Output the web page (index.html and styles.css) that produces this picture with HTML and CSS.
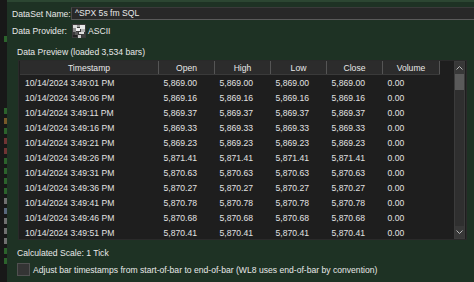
FILE: index.html
```html
<!DOCTYPE html>
<html lang="en">
<head>
    <meta charset="UTF-8">
    <title>DataSet</title>
    <link rel="stylesheet" href="styles.css">
</head>
<body>
    <div class="desktop">
        <div class="behind">
            <i class="mark c-green" style="margin-top: 36px"></i>
            <i class="mark c-green" style="margin-top: 62px"></i>
            <i class="mark c-orange"></i>
            <i class="mark c-green"></i>
            <i class="mark c-red"></i>
            <i class="mark c-red"></i>
            <i class="mark c-green"></i>
            <i class="mark c-green"></i>
            <i class="mark c-green"></i>
            <i class="mark c-green"></i>
            <i class="mark c-white"></i>
            <i class="mark c-blue"></i>
            <i class="mark c-white"></i>
            <i class="mark c-white"></i>
            <i class="mark c-white"></i>
            <i class="mark c-green"></i>
            <i class="mark c-green"></i>
        </div>

        <div class="panel">
            <div class="field-row">
                <span class="field-label">DataSet Name:</span>
                <div class="text-box">^SPX 5s fm SQL</div>
            </div>
            <div class="field-row provider">
                <span class="field-label">Data Provider:</span>
                <svg class="provider-icon" width="14" height="14" viewBox="0 0 14 14">
                    <rect x="0" y="0" width="14" height="14" fill="#3a3a3a"/>
                    <rect x="1" y="1" width="4" height="3" fill="#d8d8d8"/>
                    <rect x="5" y="1" width="3" height="2" fill="#9a9a9a"/>
                    <rect x="8" y="1" width="5" height="4" fill="#e8e8e8"/>
                    <rect x="1" y="4" width="3" height="4" fill="#8c8c8c"/>
                    <rect x="4" y="4" width="4" height="3" fill="#f0f0f0"/>
                    <rect x="9" y="5" width="4" height="3" fill="#b0b0b0"/>
                    <rect x="3" y="8" width="3" height="3" fill="#5a5a5a"/>
                    <rect x="7" y="8" width="5" height="2" fill="#dcdcdc"/>
                    <rect x="1" y="11" width="4" height="2" fill="#202020"/>
                    <rect x="6" y="11" width="3" height="3" fill="#c8c8c8"/>
                    <rect x="10" y="10" width="3" height="3" fill="#404040"/>
                </svg>
                <span class="provider-name">ASCII</span>
            </div>

            <div class="preview-title">Data Preview (loaded 3,534 bars)</div>

            <div class="grid">
                <table class="bars">
                    <thead>
                        <tr>
                            <th class="col-time">Timestamp</th>
                            <th class="col-num">Open</th>
                            <th class="col-num">High</th>
                            <th class="col-num">Low</th>
                            <th class="col-num">Close</th>
                            <th class="col-vol">Volume</th>
                        </tr>
                    </thead>
                    <tbody id="barRows"></tbody>
                </table>
                <div class="scrollbar">
                    <div class="scroll-btn">
                        <svg width="7" height="4" viewBox="0 0 7 4"><path d="M0.5 3.5 L3.5 0.5 L6.5 3.5" fill="none" stroke="#b8b8b8" stroke-width="1"/></svg>
                    </div>
                    <div class="scroll-thumb"></div>
                    <div class="scroll-track"></div>
                    <div class="scroll-btn">
                        <svg width="7" height="4" viewBox="0 0 7 4"><path d="M0.5 0.5 L3.5 3.5 L6.5 0.5" fill="none" stroke="#b8b8b8" stroke-width="1"/></svg>
                    </div>
                </div>
            </div>

            <div class="scale">Calculated Scale: 1 Tick</div>

            <label class="check">
                <span class="check-box"></span>
                <span>Adjust bar timestamps from start-of-bar to end-of-bar (WL8 uses end-of-bar by convention)</span>
            </label>
        </div>
    </div>

    <script>
        const bars = [
            ['10/14/2024 3:49:01 PM', '5,869.00'],
            ['10/14/2024 3:49:06 PM', '5,869.16'],
            ['10/14/2024 3:49:11 PM', '5,869.37'],
            ['10/14/2024 3:49:16 PM', '5,869.33'],
            ['10/14/2024 3:49:21 PM', '5,869.23'],
            ['10/14/2024 3:49:26 PM', '5,871.41'],
            ['10/14/2024 3:49:31 PM', '5,870.63'],
            ['10/14/2024 3:49:36 PM', '5,870.27'],
            ['10/14/2024 3:49:41 PM', '5,870.78'],
            ['10/14/2024 3:49:46 PM', '5,870.68'],
            ['10/14/2024 3:49:51 PM', '5,870.41']
        ];

        const tableBody = document.getElementById('barRows');
        bars.forEach(bar => {
            const row = document.createElement('tr');
            row.innerHTML = `
                <td>${bar[0]}</td>
                <td>${bar[1]}</td>
                <td>${bar[1]}</td>
                <td>${bar[1]}</td>
                <td>${bar[1]}</td>
                <td>0.00</td>
            `;
            tableBody.appendChild(row);
        });
    </script>
</body>
</html>
```

FILE: styles.css
```css
html, body {
    margin: 0;
    padding: 0;
    background-color: #161616;
    overflow: hidden;
}

.desktop {
    display: flex;
    width: 474px;
    height: 282px;
    font-family: "Liberation Sans", Arial, sans-serif;
    font-size: 8.6px;
    color: #e8e8e8;
}

.behind {
    width: 7px;
    flex: none;
    background-color: #181818;
    display: flex;
    flex-direction: column;
    align-items: flex-end;
    gap: 4px;
}

.mark {
    display: block;
    width: 3px;
    height: 6px;
    background-color: currentColor;
    opacity: 0.5;
}

.c-green { color: #3fae3f; }
.c-orange { color: #d89a3a; }
.c-red { color: #c85050; }
.c-white { color: #c8c8c8; }
.c-blue { color: #9ab8e0; }

.panel {
    flex: 1;
    background-color: #1e3224;
    border-top: 2px solid #2c4632;
    padding: 5px 0 0 5px;
    display: flex;
    flex-direction: column;
    min-width: 0;
    white-space: nowrap;
}

.field-row {
    display: flex;
    align-items: center;
    height: 13px;
}

.field-label {
    width: 59px;
    flex: none;
}

.text-box {
    flex: 1;
    height: 11px;
    line-height: 11px;
    padding-left: 3px;
    background-color: #282828;
    border-top: 1px solid #3a3a3a;
    border-bottom: 1px solid #5a5a5a;
    border-left: 1px solid #4a4a4a;
}

.provider {
    margin-top: 3px;
    height: 16px;
}

.provider-icon {
    margin-left: 1px;
    margin-right: 2px;
}

.preview-title {
    margin: 8px 0 0 5px;
    height: 13px;
}

.grid {
    display: flex;
    margin: 0 0 0 6px;
    width: 449px;
    height: 180px;
    background-color: #1e1e1e;
    border: 1px solid #2a2a2a;
    box-sizing: border-box;
}

.bars {
    border-collapse: collapse;
    margin-left: 1px;
    align-self: flex-start;
}

.bars th {
    height: 13px;
    padding: 0;
    font-weight: normal;
    text-align: center;
    background-color: #2c2c2c;
    border-right: 1px solid #555;
    border-bottom: 1px solid #3a3a3a;
}

.bars td {
    height: 15.1px;
    padding: 0 0 0 5px;
    text-align: left;
    color: #e2e2e2;
}

.col-time { width: 138px; }
.col-num { width: 55px; }
.col-vol { width: 56px; }

.scrollbar {
    margin-left: auto;
    margin-right: 1px;
    width: 11px;
    display: flex;
    flex-direction: column;
    background-color: #2f2f2f;
    border: 1px solid #3c3c3c;
    box-sizing: border-box;
}

.scroll-btn {
    height: 12px;
    display: flex;
    align-items: center;
    justify-content: center;
    background-color: #383838;
}

.scroll-thumb {
    height: 16px;
    background-color: #5a5a5a;
}

.scroll-track {
    flex: 1;
}

.scale {
    margin: 8px 0 0 5px;
    height: 13px;
}

.check {
    display: flex;
    align-items: center;
    gap: 3px;
    margin: 2px 0 0 5px;
}

.check-box {
    width: 11px;
    height: 11px;
    flex: none;
    background-color: #343434;
    border: 1px solid #505050;
}
```
